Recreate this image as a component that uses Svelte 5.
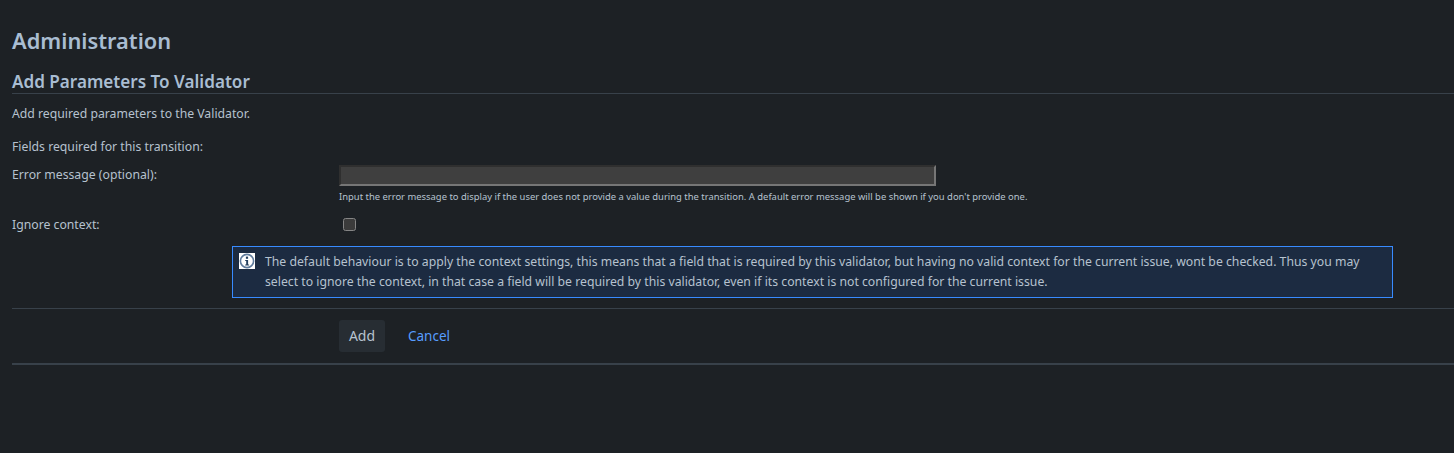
<script lang="ts">
  let ignoreContext = $state(false);
  let errorMessage = $state('');
</script>

<main class="page">
  <h1>Administration</h1>

  <form class="validator-form" onsubmit={(e) => e.preventDefault()}>
    <h2>Add Parameters To Validator</h2>
    <p class="intro">Add required parameters to the Validator.</p>
    <p class="fields-title">Fields required for this transition:</p>

    <div class="row row-text">
      <label for="error-message">Error message (optional):</label>
      <div class="field">
        <input id="error-message" type="text" bind:value={errorMessage} />
        <small>Input the error message to display if the user does not provide a value during the transition. A default error message will be shown if you don't provide one.</small>
      </div>
    </div>

    <div class="row row-check">
      <label for="ignore-context">Ignore context:</label>
      <div class="field">
        <input id="ignore-context" type="checkbox" bind:checked={ignoreContext} />
      </div>
    </div>

    <div class="info-box">
      <svg class="info-icon" viewBox="0 0 16 16" aria-hidden="true">
        <rect width="16" height="16" fill="#fff" />
        <circle cx="8" cy="8" r="6.6" fill="#fff" stroke="#5f7b9c" stroke-width="1.6" />
        <rect x="6.9" y="3.6" width="2.2" height="2.2" fill="#24405f" />
        <path d="M6.2 7h2.9v4.6h1v1H6.2v-1h1V8h-1z" fill="#24405f" />
      </svg>
      <p>The default behaviour is to apply the context settings, this means that a field that is required by this validator, but having no valid context for the current issue, wont be checked. Thus you may select to ignore the context, in that case a field will be required by this validator, even if its context is not configured for the current issue.</p>
    </div>

    <div class="actions">
      <button type="submit">Add</button>
      <a href="#cancel">Cancel</a>
    </div>
  </form>
</main>

<style>
  :global(body) {
    background: #1d2125;
  }

  .page {
    padding: 25px 0 0 12px;
    min-height: 428px;
    box-sizing: border-box;
    font-family: "Noto Sans", "Open Sans", sans-serif;
    font-size: 12.24px;
    line-height: 20px;
    color: #b6c2cf;
  }

  h1 {
    margin: 0;
    font-size: 21.8px;
    font-weight: 600;
    line-height: 32px;
    color: #a9bdd2;
  }

  h2 {
    margin: 13px 0 0;
    font-size: 17.1px;
    font-weight: 600;
    line-height: 24px;
    height: 23px;
    color: #a9bdd2;
    border-bottom: 1px solid #38414a;
  }

  .intro {
    margin: 10px 0 0;
  }

  .fields-title {
    margin: 13px 0 0;
  }

  .row {
    display: grid;
    grid-template-columns: 327px 1fr;
  }

  .row-text {
    margin-top: 8px;
  }

  .row-check {
    margin-top: 11px;
  }

  .field small {
    display: block;
    margin-top: 4px;
    font-size: 9.43px;
    line-height: 14px;
    color: #b6c2cf;
  }

  input[type="text"] {
    display: block;
    width: 597px;
    height: 21px;
    box-sizing: border-box;
    background: #3f3f3f;
    border: 2px solid;
    border-color: #2f2f2f #767676 #767676 #2f2f2f;
    padding: 0;
    outline: none;
    color: #b6c2cf;
  }

  input[type="checkbox"] {
    display: block;
    appearance: none;
    width: 13px;
    height: 13px;
    margin: 3px 0 0 4px;
    box-sizing: border-box;
    background: #3b3b3b;
    border: 1px solid #858585;
    border-radius: 2.5px;
  }

  .info-box {
    display: flex;
    align-items: flex-start;
    gap: 10px;
    box-sizing: border-box;
    width: 1161px;
    height: 52px;
    margin: 11px 0 0 220px;
    padding: 5px 24px 0 6px;
    background: #1c2b41;
    border: 1px solid #388bff;
  }

  .info-box p {
    margin: 0;
    line-height: 20px;
  }

  .info-icon {
    flex: none;
    width: 16px;
    height: 16px;
    margin-top: 1px;
  }

  .actions {
    display: flex;
    align-items: center;
    gap: 23px;
    margin-top: 10px;
    padding: 11px 0 11px 327px;
    border-top: 1px solid #38414a;
    border-bottom: 2px solid #38414a;
  }

  button {
    width: 46px;
    height: 32px;
    padding: 0;
    border: none;
    border-radius: 3px;
    background: #272d33;
    color: #b6c2cf;
    font: inherit;
    font-size: 14px;
  }

  a {
    color: #579dff;
    text-decoration: none;
    font-size: 13.5px;
  }
</style>
